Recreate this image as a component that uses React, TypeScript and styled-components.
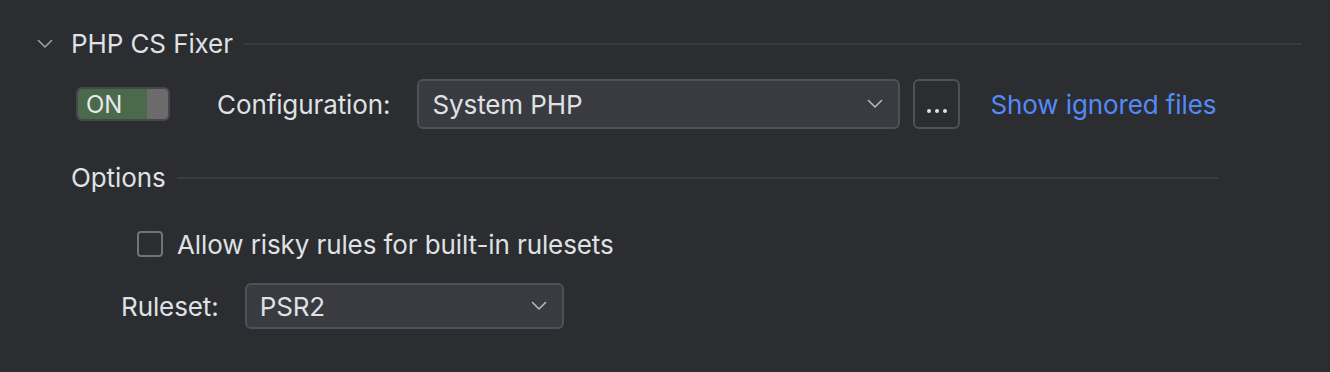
import React from 'react';
import styled, { createGlobalStyle } from 'styled-components';

const GlobalStyle = createGlobalStyle`
  html, body {
    margin: 0;
    padding: 0;
    background: #2b2d30;
  }
  body {
    font-family: Inter, "Noto Sans", sans-serif;
    color: #dfe1e5;
    letter-spacing: -0.1px;
  }
`;

const Page = styled.div`
  width: 1330px;
  height: 372px;
  padding-top: 22px;
  box-sizing: border-box;
  background: #2b2d30;
  display: flex;
  flex-direction: column;
`;

const GroupHeader = styled.div<{ $left: number; $right: number; $top?: number }>`
  display: flex;
  align-items: center;
  height: 44px;
  margin-top: ${p => p.$top ?? 0}px;
  padding-left: ${p => p.$left}px;
  padding-right: ${p => p.$right}px;
`;

const Chevron = styled.svg`
  width: 16px;
  height: 10px;
  margin-right: 18px;
  flex: none;
`;

const Title = styled.span`
  font-size: 26px;
  line-height: 1;
  color: #dfe1e5;
  white-space: nowrap;
`;

const Line = styled.div`
  flex: 1;
  height: 2px;
  background: #393b40;
  margin-left: 11px;
`;

const Row = styled.div<{ $top: number; $left: number; $height: number }>`
  display: flex;
  align-items: center;
  margin-top: ${p => p.$top}px;
  padding-left: ${p => p.$left}px;
  height: ${p => p.$height}px;
`;

const Toggle = styled.div`
  width: 94px;
  height: 34px;
  box-sizing: border-box;
  border: 2px solid #45474c;
  border-radius: 6px;
  display: flex;
  overflow: hidden;
  flex: none;
  margin-right: 47px;
`;

const ToggleOn = styled.div`
  flex: 1;
  background: #4b6a4c;
  color: #e6e8ea;
  font-size: 24px;
  display: flex;
  align-items: center;
  padding-left: 8px;
`;

const ToggleKnob = styled.div`
  width: 21px;
  background: #6b6b6b;
`;

const Label = styled.span<{ $gap: number }>`
  font-size: 26px;
  color: #dfe1e5;
  margin-right: ${p => p.$gap}px;
  white-space: nowrap;
`;

const Select = styled.div<{ $width: number }>`
  width: ${p => p.$width}px;
  height: 100%;
  box-sizing: border-box;
  background: #393b40;
  border: 2px solid #4e5157;
  border-radius: 6px;
  display: flex;
  align-items: center;
  justify-content: space-between;
  padding: 0 14px 0 13px;
  font-size: 26px;
  color: #dfe1e5;
  flex: none;
`;

const SelectArrow = styled.svg`
  width: 18px;
  height: 10px;
`;

const DotsButton = styled.div`
  width: 47px;
  height: 100%;
  box-sizing: border-box;
  margin-left: 13px;
  border: 2px solid #4e5157;
  border-radius: 6px;
  display: flex;
  align-items: center;
  justify-content: center;
  gap: 4px;
  padding-top: 14px;
  flex: none;
`;

const Dot = styled.span`
  width: 4px;
  height: 4px;
  border-radius: 50%;
  background: #dfe1e5;
`;

const Link = styled.span`
  margin-left: 30px;
  font-size: 26px;
  color: #548af7;
  white-space: nowrap;
`;

const Checkbox = styled.div`
  width: 26px;
  height: 26px;
  box-sizing: border-box;
  border: 2px solid #6f737a;
  border-radius: 4px;
  margin-right: 14px;
  flex: none;
`;

const ChevronDown = ({ color }: { color: string }) => (
  <path d="M1.5 1.5 L8 8 L14.5 1.5" fill="none" stroke={color} strokeWidth="1.6" strokeLinecap="round" strokeLinejoin="round" />
);

const App: React.FC = () => {
  return (
    <>
      <GlobalStyle />
      <Page>
        <GroupHeader $left={37} $right={28}>
          <Chevron viewBox="0 0 16 10">
            <ChevronDown color="#9da0a8" />
          </Chevron>
          <Title>PHP CS Fixer</Title>
          <Line />
        </GroupHeader>

        <Row $top={13} $left={76} $height={50}>
          <Toggle>
            <ToggleOn>ON</ToggleOn>
            <ToggleKnob />
          </Toggle>
          <Label $gap={27}>Configuration:</Label>
          <Select $width={483}>
            <span>System PHP</span>
            <SelectArrow viewBox="0 0 16 10">
              <ChevronDown color="#b4b8bf" />
            </SelectArrow>
          </Select>
          <DotsButton>
            <Dot />
            <Dot />
            <Dot />
          </DotsButton>
          <Link>Show ignored files</Link>
        </Row>

        <GroupHeader $left={71} $right={112} $top={27}>
          <Title>Options</Title>
          <Line />
        </GroupHeader>

        <Row $top={31} $left={137} $height={26}>
          <Checkbox />
          <Label $gap={0}>Allow risky rules for built-in rulesets</Label>
        </Row>

        <Row $top={26} $left={121} $height={46}>
          <Label $gap={26}>Ruleset:</Label>
          <Select $width={319}>
            <span>PSR2</span>
            <SelectArrow viewBox="0 0 16 10">
              <ChevronDown color="#b4b8bf" />
            </SelectArrow>
          </Select>
        </Row>
      </Page>
    </>
  );
};

export default App;
